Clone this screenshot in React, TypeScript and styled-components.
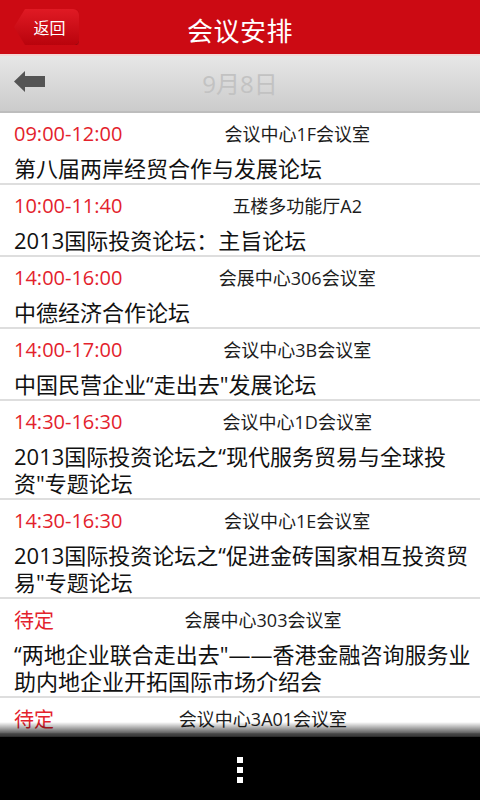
import styled, { createGlobalStyle } from 'styled-components';

type Meeting = {
  time: string;
  place: string;
  title?: string;
};

const meetings: Meeting[] = [
  { time: '09:00-12:00', place: '会议中心1F会议室', title: '第八届两岸经贸合作与发展论坛' },
  { time: '10:00-11:40', place: '五楼多功能厅A2', title: '2013国际投资论坛：主旨论坛' },
  { time: '14:00-16:00', place: '会展中心306会议室', title: '中德经济合作论坛' },
  { time: '14:00-17:00', place: '会议中心3B会议室', title: '中国民营企业“走出去"发展论坛' },
  {
    time: '14:30-16:30',
    place: '会议中心1D会议室',
    title: '2013国际投资论坛之“现代服务贸易与全球投资"专题论坛',
  },
  {
    time: '14:30-16:30',
    place: '会议中心1E会议室',
    title: '2013国际投资论坛之“促进金砖国家相互投资贸易"专题论坛',
  },
  {
    time: '待定',
    place: '会展中心303会议室',
    title: '“两地企业联合走出去"——香港金融咨询服务业助内地企业开拓国际市场介绍会',
  },
  { time: '待定', place: '会议中心3A01会议室' },
];

const GlobalStyle = createGlobalStyle`
  html, body {
    margin: 0;
    padding: 0;
    background: #fff;
  }
  body {
    font-family: "Open Sans", "Noto Sans CJK SC", sans-serif;
  }
  * {
    box-sizing: border-box;
  }
`;

export default function App() {
  return (
    <>
      <GlobalStyle />
      <StScreen>
        <StHeader>
          <StBackButton type="button">返回</StBackButton>
          <StTitle>会议安排</StTitle>
        </StHeader>
        <StDateBar>
          <StPrevButton type="button" aria-label="前一天">
            <svg width="32" height="22" viewBox="0 0 32 22">
              <path d="M0 10.5 L11 0 L11 5 L31 5 L31 16 L11 16 L11 21 Z" fill="#545454" />
            </svg>
          </StPrevButton>
          <StDate>9月8日</StDate>
        </StDateBar>
        <StList>
          {meetings.map((m, i) => (
            <StItem key={i}>
              <StMeta>
                <StTime>{m.time}</StTime>
                <StPlace>{m.place}</StPlace>
              </StMeta>
              {m.title && <StItemTitle>{m.title}</StItemTitle>}
            </StItem>
          ))}
        </StList>
        <StNavBar>
          <StMenuDots>
            <i />
            <i />
            <i />
          </StMenuDots>
        </StNavBar>
      </StScreen>
    </>
  );
}

const StScreen = styled.div`
  display: flex;
  flex-direction: column;
  width: 480px;
  height: 800px;
  overflow: hidden;
  background: #fff;
`;

const StHeader = styled.header`
  position: relative;
  display: flex;
  align-items: center;
  justify-content: center;
  height: 56px;
  padding: 0 14px;
  flex-shrink: 0;

  background: #cc0a13;
  border-bottom: 2px solid #f3d6d6;
`;

const StBackButton = styled.button`
  position: absolute;
  left: 14px;
  top: 9px;
  width: 65px;
  height: 36px;
  padding: 0 0 0 6px;
  border: none;

  background: linear-gradient(#e01a24, #b9030c);
  clip-path: polygon(0 50%, 11px 0, 100% 0, 100% 100%, 11px 100%);
  border-radius: 0 6px 6px 0;
  box-shadow: 0 1px 2px rgba(0, 0, 0, 0.4);

  color: #fff;
  font-family: "Noto Sans CJK SC", sans-serif;
  font-size: 16px;
  line-height: 36px;
`;

const StTitle = styled.h1`
  margin: 4px 0 0;
  color: #fff;
  font-family: "Noto Sans CJK SC", sans-serif;
  font-size: 26px;
  font-weight: 400;
  letter-spacing: 0.5px;
`;

const StDateBar = styled.div`
  position: relative;
  display: flex;
  align-items: center;
  justify-content: center;
  height: 57px;
  flex-shrink: 0;

  background: linear-gradient(#e7e7e7, #cbcbcb);
  border-bottom: 2px solid #bdbdbd;
`;

const StPrevButton = styled.button`
  position: absolute;
  left: 14px;
  top: 15px;
  padding: 0;
  border: none;
  background: none;
  line-height: 0;
`;

const StDate = styled.span`
  color: #c2c2c2;
  font-size: 24px;
  line-height: 1;
`;

const StList = styled.ul`
  flex: 1;
  min-height: 0;
  margin: 0;
  padding: 0;
  list-style: none;
  overflow: hidden;
`;

const StItem = styled.li`
  padding: 6px 8px 1px 14px;
  border-bottom: 2px solid #dedede;
`;

const StMeta = styled.div`
  display: flex;
  align-items: center;
  height: 28px;
`;

const StTime = styled.span`
  color: #e3222c;
  font-size: 20px;
  white-space: nowrap;
`;

const StPlace = styled.span`
  flex: 1;
  text-align: center;
  color: #1c1c1c;
  font-size: 18px;
`;

const StItemTitle = styled.p`
  margin: 8px 0 0;
  color: #111;
  font-size: 22px;
  line-height: 27px;
`;

const StNavBar = styled.nav`
  position: relative;
  display: flex;
  align-items: center;
  justify-content: center;
  height: 63px;
  flex-shrink: 0;
  background: #000;

  &::before {
    content: '';
    position: absolute;
    left: 0;
    right: 0;
    top: -15px;
    height: 15px;
    background: linear-gradient(rgba(0, 0, 0, 0), rgba(0, 0, 0, 0.85));
  }
`;

const StMenuDots = styled.div`
  display: flex;
  flex-direction: column;
  gap: 4px;
  margin-top: 2px;

  & > i {
    display: block;
    width: 6px;
    height: 6px;
    background: #fff;
  }
`;
